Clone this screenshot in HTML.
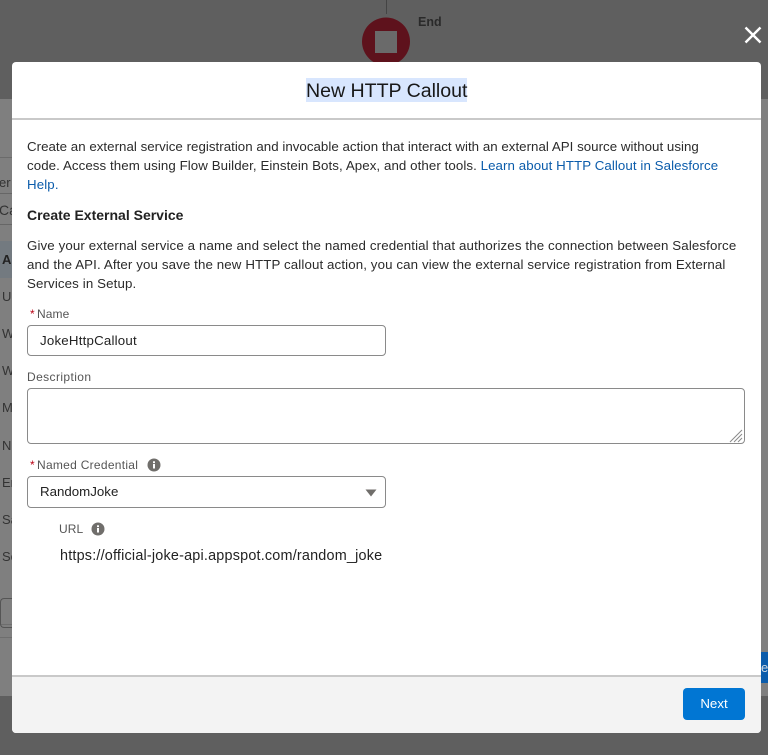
<!DOCTYPE html>
<html>
<head>
<meta charset="utf-8">
<style>
html,body{margin:0;padding:0;width:768px;height:755px;overflow:hidden;background:#5f5f5f;font-family:"Liberation Sans",sans-serif;color:#181818}
.a{position:absolute;white-space:nowrap}
.t{font-size:13.3px;line-height:19px;color:#2b2b2b;letter-spacing:.12px}
.lb{font-size:12px;line-height:16px;color:#555;letter-spacing:.1px}
.st{color:#ba0517;font-size:12px}
.box{position:absolute;box-sizing:border-box;background:#fff;border:1px solid #8a8a8a;border-radius:4px}
.side{font-size:13px;color:#222;left:2px;line-height:16px}
</style>
</head>
<body>
<div class="a" style="left:0;top:99px;width:768px;height:597px;background:#7f7f7f"></div>
<div class="a" style="left:0;top:157px;width:12px;height:1px;background:#6b6b6b"></div>
<div class="a" style="left:0;top:193px;width:12px;height:1px;background:#666"></div>
<div class="a" style="left:0;top:224px;width:12px;height:1px;background:#666"></div>
<div class="a" style="left:0;top:241px;width:12px;height:37px;background:#737a80"></div>
<div class="a" style="left:0;top:624px;width:12px;height:1px;background:#6e6e6e"></div>
<div class="a" style="left:0;top:637px;width:12px;height:1px;background:#6e6e6e"></div>
<div class="a" style="left:0;top:598px;width:12px;height:30px;box-sizing:border-box;border:1px solid #555;border-right:0;border-radius:4px 0 0 4px"></div>
<div class="a" style="left:750px;top:652px;width:18px;height:31px;background:#0b5cab"></div>
<div class="a" style="left:761px;top:660px;font-size:13px;color:#d0d8e0">e</div>
<div class="a side" style="top:175px;left:-1px;color:#333">er</div>
<div class="a side" style="top:202px;left:-1px;color:#333;font-size:14px">Ca</div>
<div class="a side" style="top:252px;font-weight:bold">A</div>
<div class="a side" style="top:289px;color:#333">U</div>
<div class="a side" style="top:326px;color:#333">W</div>
<div class="a side" style="top:363px;color:#333">W</div>
<div class="a side" style="top:400px;color:#333">M</div>
<div class="a side" style="top:438px;color:#333">N</div>
<div class="a side" style="top:475px;color:#333">Er</div>
<div class="a side" style="top:512px;color:#333">Sa</div>
<div class="a side" style="top:549px;color:#333">Se</div>

<div class="a" style="left:385.500px;top:0;width:1.500px;height:14px;background:#444"></div>
<svg class="a" style="left:360px;top:16px" width="52" height="50"><ellipse cx="26" cy="25.500" rx="24" ry="24" fill="#5e121c"/><rect x="15" y="15" width="22" height="22" fill="#6a6a6a"/></svg>
<div class="a" style="left:418px;top:15px;font-size:12.500px;font-weight:bold;line-height:15px;color:#2a2a2a">End</div>
<svg class="a" style="left:743px;top:25px" width="20" height="20"><path d="M2.500 2.500L17.500 17.500M17.500 2.500L2.500 17.500" stroke="#fff" stroke-width="2.400" fill="none"/></svg>

<div class="a" style="left:11.500px;top:61.500px;width:749px;height:671px;background:#fff;border-radius:4px;overflow:hidden">
  <div class="a" style="left:0;top:56.500px;width:749px;height:2px;background:#c9c9c9"></div>
  <div class="a" style="left:0;top:613.500px;width:749px;height:57.500px;background:#f3f3f3;border-top:2px solid #c9c9c9"></div>
</div>

<div class="a" style="left:306px;top:78px;width:160.500px;height:24px;background:#d8e6fe"></div>
<div class="a" style="left:306px;top:79px;font-size:19.600px;line-height:24px;color:#181818;letter-spacing:-.03px">New HTTP Callout</div>

<div class="a t" style="left:27px;top:137px;letter-spacing:.025px">Create an external service registration and invocable action that interact with an external API source without using</div>
<div class="a t" style="left:27px;top:156px;letter-spacing:.075px">code. Access them using Flow Builder, Einstein Bots, Apex, and other tools. <span style="color:#0b5cab">Learn about HTTP Callout in Salesforce</span></div>
<div class="a t" style="left:27px;top:175px;color:#0b5cab">Help.</div>
<div class="a" style="left:27px;top:206px;font-size:14px;line-height:18px;font-weight:bold;color:#222">Create External Service</div>
<div class="a t" style="left:27px;top:236px">Give your external service a name and select the named credential that authorizes the connection between Salesforce</div>
<div class="a t" style="left:27px;top:255px;letter-spacing:.11px">and the API. After you save the new HTTP callout action, you can view the external service registration from External</div>
<div class="a t" style="left:27px;top:274px">Services in Setup.</div>

<div class="a st" style="left:30px;top:306px;line-height:16px">*</div>
<div class="a lb" style="left:37px;top:306px">Name</div>
<div class="box" style="left:27px;top:325px;width:359px;height:31px"></div>
<div class="a" style="left:40px;top:332px;font-size:13.300px;line-height:18px;color:#222;letter-spacing:.2px">JokeHttpCallout</div>

<div class="a lb" style="left:27px;top:369px;letter-spacing:.4px">Description</div>
<div class="box" style="left:27px;top:388px;width:718px;height:56px"></div>
<svg class="a" style="left:729px;top:429px" width="15" height="14"><path d="M1 13L13 1M5 13L13 5M9 13L13 9" stroke="#8a8a8a" stroke-width="1" fill="none"/></svg>

<div class="a st" style="left:30px;top:457px;line-height:16px">*</div>
<div class="a lb" style="left:37px;top:457px;letter-spacing:.28px">Named Credential</div>
<svg class="a" style="left:147px;top:458px" width="14" height="14"><circle cx="7" cy="7" r="6.500" fill="#706e6b"/><rect x="6" y="6" width="2" height="4.500" fill="#fff"/><rect x="6" y="3.300" width="2" height="1.800" fill="#fff"/></svg>
<div class="box" style="left:27px;top:476px;width:359px;height:32px"></div>
<div class="a" style="left:40px;top:483px;font-size:13.300px;line-height:18px;color:#222">RandomJoke</div>
<svg class="a" style="left:365px;top:489px" width="12" height="8"><path d="M.500 .500H11.500L6 7.500Z" fill="#706e6b"/></svg>

<div class="a lb" style="left:59px;top:521px">URL</div>
<svg class="a" style="left:91px;top:522px" width="14" height="14"><circle cx="7" cy="7" r="6.500" fill="#706e6b"/><rect x="6" y="6" width="2" height="4.500" fill="#fff"/><rect x="6" y="3.300" width="2" height="1.800" fill="#fff"/></svg>
<div class="a" style="left:60px;top:547px;font-size:14.400px;line-height:18px;color:#222;letter-spacing:.2px">https://official-joke-api.appspot.com/random_joke</div>

<div class="a" style="left:683px;top:688px;width:62px;height:32px;background:#0176d3;border-radius:4px;color:#fff;font-size:13.300px;line-height:32px;text-align:center">Next</div>
</body>
</html>
